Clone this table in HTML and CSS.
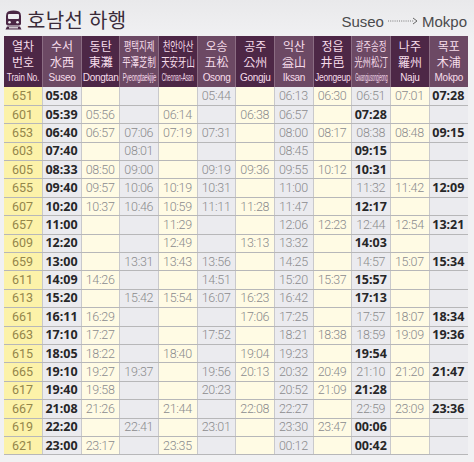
FILE: index.html
```html
<!DOCTYPE html>
<html lang="ko">
<head>
<meta charset="utf-8">
<link rel="stylesheet" href="styles.css">
</head>
<body>
<div class="page">
  <div class="titlebar">
    <div class="title">
      <svg class="train" width="17" height="20" viewBox="0 0 17 20">
        <path d="M3 1.5 Q8.5 -0.5 14 1.5 Q16 2.5 16 6 L16 13.5 Q16 15.5 14 15.5 L3 15.5 Q1 15.5 1 13.5 L1 6 Q1 2.5 3 1.5 Z" fill="#4b2745"/>
        <rect x="3" y="4" width="11" height="5" rx="1" fill="#f0eff2"/>
        <circle cx="4.5" cy="12.3" r="1.3" fill="#f0eff2"/>
        <circle cx="12.5" cy="12.3" r="1.3" fill="#f0eff2"/>
        <path d="M2 16.5 L15 16.5 L16.5 19.5 L0.5 19.5 Z" fill="#4b2745"/>
        <rect x="4" y="17.2" width="9" height="1.2" fill="#f0eff2"/>
      </svg>
      <span class="title-text">호남선 하행</span>
    </div>
    <div class="route">
      <span>Suseo</span>
      <svg class="arrow" width="32" height="8" viewBox="0 0 32 8">
        <line x1="1" y1="4" x2="27" y2="4" stroke="#777" stroke-width="1" stroke-dasharray="1 1.2"/>
        <path d="M26 1 L30 4 L26 7" fill="none" stroke="#666" stroke-width="1"/>
      </svg>
      <span>Mokpo</span>
    </div>
  </div>

  <table class="tt">
    <colgroup>
      <col class="cn"><col class="cg"><col class="cc"><col class="cg"><col class="cc"><col class="cg"><col class="cc"><col class="cg"><col class="cc"><col class="cg"><col class="cc"><col class="cg">
    </colgroup>
    <thead>
      <tr>
        <th class="hd"><span class="k">열차</span><span class="k">번호</span><span class="e"><span class="sq s85">Train No.</span></span></th>
        <th class="hl"><span class="k">수서</span><span class="k">水西</span><span class="e">Suseo</span></th>
        <th class="hd"><span class="k">동탄</span><span class="k">東灘</span><span class="e">Dongtan</span></th>
        <th class="hl"><span class="k"><span class="sq s70">평택지제</span></span><span class="k"><span class="sq s70">平澤芝制</span></span><span class="e"><span class="sq s55">Pyeongtaekjije</span></span></th>
        <th class="hd"><span class="k"><span class="sq s70">천안아산</span></span><span class="k"><span class="sq s70">天安牙山</span></span><span class="e"><span class="sq s50">Cheonan-Asan</span></span></th>
        <th class="hl"><span class="k">오송</span><span class="k">五松</span><span class="e">Osong</span></th>
        <th class="hd"><span class="k">공주</span><span class="k">公州</span><span class="e">Gongju</span></th>
        <th class="hl"><span class="k">익산</span><span class="k">益山</span><span class="e">Iksan</span></th>
        <th class="hd"><span class="k">정읍</span><span class="k">井邑</span><span class="e"><span class="sq s85">Jeongeup</span></span></th>
        <th class="hl"><span class="k"><span class="sq s70">광주송정</span></span><span class="k"><span class="sq s70">光州松汀</span></span><span class="e"><span class="sq s40">Gwangjusongjeong</span></span></th>
        <th class="hd"><span class="k">나주</span><span class="k">羅州</span><span class="e">Naju</span></th>
        <th class="hl"><span class="k">목포</span><span class="k">木浦</span><span class="e">Mokpo</span></th>
      </tr>
    </thead>
    <tbody>
      <tr><td class="no">651</td><td class="b">05:08</td><td></td><td></td><td></td><td>05:44</td><td></td><td>06:13</td><td>06:30</td><td>06:51</td><td>07:01</td><td class="b">07:28</td></tr>
      <tr><td class="no">601</td><td class="b">05:39</td><td>05:56</td><td></td><td>06:14</td><td></td><td>06:38</td><td>06:57</td><td></td><td class="b">07:28</td><td></td><td></td></tr>
      <tr><td class="no">653</td><td class="b">06:40</td><td>06:57</td><td>07:06</td><td>07:19</td><td>07:31</td><td></td><td>08:00</td><td>08:17</td><td>08:38</td><td>08:48</td><td class="b">09:15</td></tr>
      <tr><td class="no">603</td><td class="b">07:40</td><td></td><td>08:01</td><td></td><td></td><td></td><td>08:45</td><td></td><td class="b">09:15</td><td></td><td></td></tr>
      <tr><td class="no">605</td><td class="b">08:33</td><td>08:50</td><td>09:00</td><td></td><td>09:19</td><td>09:36</td><td>09:55</td><td>10:12</td><td class="b">10:31</td><td></td><td></td></tr>
      <tr><td class="no">655</td><td class="b">09:40</td><td>09:57</td><td>10:06</td><td>10:19</td><td>10:31</td><td></td><td>11:00</td><td></td><td>11:32</td><td>11:42</td><td class="b">12:09</td></tr>
      <tr><td class="no">607</td><td class="b">10:20</td><td>10:37</td><td>10:46</td><td>10:59</td><td>11:11</td><td>11:28</td><td>11:47</td><td></td><td class="b">12:17</td><td></td><td></td></tr>
      <tr><td class="no">657</td><td class="b">11:00</td><td></td><td></td><td>11:29</td><td></td><td></td><td>12:06</td><td>12:23</td><td>12:44</td><td>12:54</td><td class="b">13:21</td></tr>
      <tr><td class="no">609</td><td class="b">12:20</td><td></td><td></td><td>12:49</td><td></td><td>13:13</td><td>13:32</td><td></td><td class="b">14:03</td><td></td><td></td></tr>
      <tr><td class="no">659</td><td class="b">13:00</td><td></td><td>13:31</td><td>13:43</td><td>13:56</td><td></td><td>14:25</td><td></td><td>14:57</td><td>15:07</td><td class="b">15:34</td></tr>
      <tr><td class="no">611</td><td class="b">14:09</td><td>14:26</td><td></td><td></td><td>14:51</td><td></td><td>15:20</td><td>15:37</td><td class="b">15:57</td><td></td><td></td></tr>
      <tr><td class="no">613</td><td class="b">15:20</td><td></td><td>15:42</td><td>15:54</td><td>16:07</td><td>16:23</td><td>16:42</td><td></td><td class="b">17:13</td><td></td><td></td></tr>
      <tr><td class="no">661</td><td class="b">16:11</td><td>16:29</td><td></td><td></td><td></td><td>17:06</td><td>17:25</td><td></td><td>17:57</td><td>18:07</td><td class="b">18:34</td></tr>
      <tr><td class="no">663</td><td class="b">17:10</td><td>17:27</td><td></td><td></td><td>17:52</td><td></td><td>18:21</td><td>18:38</td><td>18:59</td><td>19:09</td><td class="b">19:36</td></tr>
      <tr><td class="no">615</td><td class="b">18:05</td><td>18:22</td><td></td><td>18:40</td><td></td><td>19:04</td><td>19:23</td><td></td><td class="b">19:54</td><td></td><td></td></tr>
      <tr><td class="no">665</td><td class="b">19:10</td><td>19:27</td><td>19:37</td><td></td><td>19:56</td><td>20:13</td><td>20:32</td><td>20:49</td><td>21:10</td><td>21:20</td><td class="b">21:47</td></tr>
      <tr><td class="no">617</td><td class="b">19:40</td><td>19:58</td><td></td><td></td><td>20:23</td><td></td><td>20:52</td><td>21:09</td><td class="b">21:28</td><td></td><td></td></tr>
      <tr><td class="no">667</td><td class="b">21:08</td><td>21:26</td><td></td><td>21:44</td><td></td><td>22:08</td><td>22:27</td><td></td><td>22:59</td><td>23:09</td><td class="b">23:36</td></tr>
      <tr><td class="no">619</td><td class="b">22:20</td><td></td><td>22:41</td><td></td><td>23:01</td><td></td><td>23:30</td><td>23:47</td><td class="b">00:06</td><td></td><td></td></tr>
      <tr><td class="no">621</td><td class="b">23:00</td><td>23:17</td><td></td><td>23:35</td><td></td><td></td><td>00:12</td><td></td><td class="b">00:42</td><td></td><td></td></tr>
    </tbody>
  </table>
</div>
</body>
</html>
```

FILE: styles.css
```css
html, body {
  margin: 0;
  padding: 0;
  background: #efeff1;
}
.page {
  width: 474px;
  height: 462px;
  overflow: hidden;
  background: linear-gradient(#e9e9eb, #f1f1f3 40px, #f1f1f3);
  font-family: "Noto Sans", "Noto Sans CJK KR", sans-serif;
}
.titlebar {
  height: 36px;
  display: flex;
  align-items: center;
  justify-content: space-between;
  padding: 0 7px 0 5px;
  box-sizing: border-box;
}
.title {
  display: flex;
  align-items: center;
  gap: 5px;
  padding-top: 4px;
}
.train {
  display: block;
}
.title-text {
  font-family: "Noto Sans CJK KR", sans-serif;
  font-size: 20px;
  color: #3a2b39;
  letter-spacing: 0.3px;
  line-height: 24px;
}
.route {
  display: flex;
  align-items: center;
  gap: 3px;
  font-family: "Liberation Sans", "Noto Sans", sans-serif;
  font-size: 15px;
  color: #4a4a4c;
  padding-top: 6px;
}
.arrow {
  display: block;
}
.tt {
  margin-left: 4px;
  width: 464px;
  table-layout: fixed;
  border-collapse: collapse;
}
.cn { background: #fcf2a9; }
.cg { background: #ebebef; }
.cc { background: #fffbe4; }
.tt th {
  height: 51px;
  padding: 2px 0 0;
  box-sizing: border-box;
  vertical-align: top;
  color: #f6dcea;
  font-weight: normal;
  border-left: 1px solid #8a6c82;
  overflow: hidden;
}
.tt th:first-child { border-left: none; }
.hd { background: #4d2746; }
.hl { background: #6c4964; }
.tt th > span {
  display: flex;
  justify-content: center;
  white-space: nowrap;
  overflow: visible;
}
.sq {
  display: inline-block;
  flex: none;
  transform-origin: center;
}
.s85 { transform: scaleX(0.85); }
.s70 { transform: scaleX(0.7); }
.s55 { transform: scaleX(0.55); }
.s50 { transform: scaleX(0.5); }
.s40 { transform: scaleX(0.4); }
.k {
  font-family: "Noto Sans CJK KR", sans-serif;
  font-size: 12px;
  line-height: 16px;
  height: 16px;
}
.e {
  font-family: "Liberation Sans Narrow", "Liberation Sans", sans-serif;
  font-size: 10px;
  line-height: 15px;
  height: 15px;
  letter-spacing: -0.3px;
}
.tt td {
  height: 18.4px;
  padding: 0 1px 0 0;
  box-sizing: border-box;
  text-align: center;
  font-family: "Roboto", "Noto Sans", sans-serif;
  font-weight: 300;
  font-size: 12.5px;
  letter-spacing: -0.3px;
  line-height: 16px;
  color: #8b8b8e;
  border-bottom: 1px solid #b7b7b9;
  border-left: 1px solid #c9c9cc;
  white-space: nowrap;
}
.tt td:first-child { border-left: none; }
.tt td.no {
  color: #94864b;
  font-weight: 400;
  letter-spacing: 0;
}
.tt td.b {
  font-family: "Noto Sans", sans-serif;
  font-weight: 700;
  color: #262628;
  font-size: 12.5px;
  letter-spacing: 0;
}
```
